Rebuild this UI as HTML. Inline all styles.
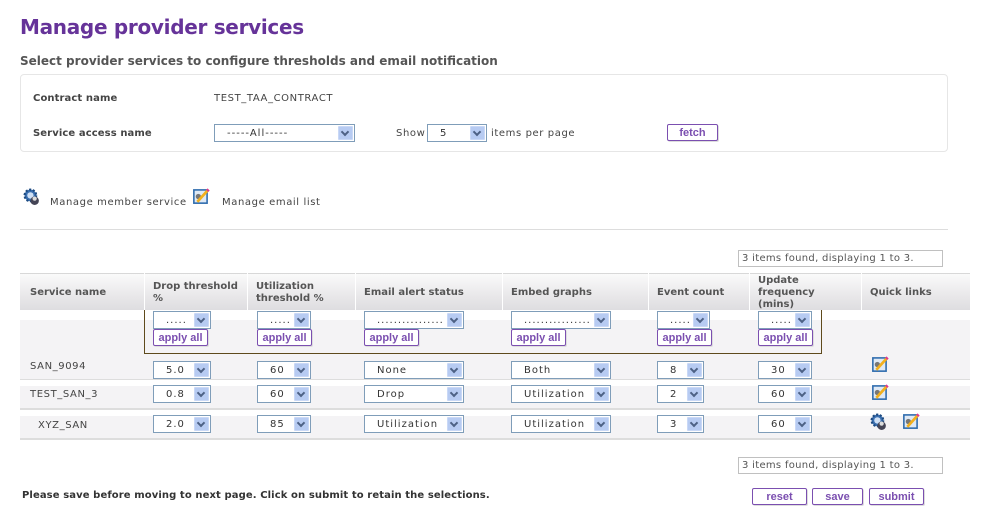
<!DOCTYPE html>
<html><head><meta charset="utf-8"><style>
*{margin:0;padding:0;box-sizing:border-box}
body{width:989px;height:522px;background:#fff;font-family:"DejaVu Sans","Liberation Sans",sans-serif;color:#555;position:relative;overflow:hidden}
.a{position:absolute;white-space:nowrap}
.t{font-size:10px;color:#444;letter-spacing:0.6px}
.b{font-size:10px;font-weight:bold;color:#444;letter-spacing:0.1px}
.sel{position:absolute;height:18px;border:1px solid #7f9db9;background:#fff;font-size:10px;color:#333;line-height:17px;padding-left:12px;letter-spacing:1px}
.sel i{position:absolute;right:1px;top:1px;width:15px;height:14px;background:#b7cbf2;border:1px solid #c9d8f6;border-radius:1px}
.sel i:after{content:"";position:absolute;left:3px;top:2px;width:4px;height:4px;border-right:2px solid #4d6185;border-bottom:2px solid #4d6185;transform:rotate(45deg)}
.btn{position:absolute;height:17px;border:1px solid #7b4fb0;border-radius:2px;background:#fff;color:#7b4fb0;font:bold 11px "Liberation Sans",sans-serif;text-align:center;line-height:17px;box-shadow:1px 1px 0 #ddd}
.th{position:absolute;top:273px;height:37px;font-size:10px;font-weight:bold;color:#555;line-height:12px;display:flex;align-items:center;padding-left:8px;padding-top:3px;border-left:1px solid #fff}
.ic{position:absolute;width:18px;height:18px}
</style></head><body>
<div class="a" style="left:20px;top:15px;font:bold 20px 'DejaVu Sans',sans-serif;color:#663399;letter-spacing:-0.3px">Manage provider services</div>
<div class="a" style="left:20px;top:54px;font:bold 12px 'DejaVu Sans',sans-serif;color:#555">Select provider services to configure thresholds and email notification</div>
<div class="a" style="left:20px;top:74px;width:928px;height:78px;border:1px solid #e6e6e6;border-radius:4px"></div>
<div class="a b" style="left:33px;top:93px">Contract name</div>
<div class="a t" style="left:214px;top:93px">TEST_TAA_CONTRACT</div>
<div class="a b" style="left:33px;top:128px">Service access name</div>
<div class="sel" style="left:214px;top:124px;width:141px">-----All-----<i></i></div>
<div class="a t" style="left:396px;top:128px">Show</div>
<div class="sel" style="left:427px;top:124px;width:60px">5<i></i></div>
<div class="a t" style="left:491px;top:128px">items per page</div>
<div class="btn" style="left:667px;top:124px;width:51px">fetch</div>

<svg class="ic" style="left:23px;top:188px" viewBox="0 0 17 17"><circle cx="7" cy="7" r="5.5" fill="#3a6fb0" stroke="#1d4a80" stroke-dasharray="2 1.5" stroke-width="2"/><circle cx="7" cy="7" r="3" fill="#cfe0f5"/><circle cx="11" cy="12" r="4" fill="#445"/><circle cx="11" cy="10" r="2" fill="#ddd"/></svg>
<div class="a t" style="left:50px;top:197px">Manage member service</div>
<svg class="ic" style="left:192px;top:187px" viewBox="0 0 17 17"><rect x="1" y="2" width="14" height="14" fill="#2f6cae"/><rect x="2.5" y="3.5" width="11" height="11" fill="#dfe9f5"/><circle cx="6" cy="9" r="2.5" fill="#777"/><path d="M5 14L15 3" stroke="#f2b01e" stroke-width="2.5"/><path d="M14 2l2 2" stroke="#e03a8a" stroke-width="2"/></svg>
<div class="a t" style="left:222px;top:197px">Manage email list</div>
<div class="a" style="left:20px;top:229px;width:928px;height:1px;background:#ddd"></div>

<div class="a t" style="left:738px;top:250px;width:205px;height:17px;border:1px solid #c0c0c0;padding-left:3px;line-height:16px;color:#555;letter-spacing:0.3px">3 items found, displaying 1 to 3.</div>

<div class="a" style="left:20px;top:273px;width:950px;height:37px;background:linear-gradient(#fafafa,#e9e8ea 60%,#dedde0);border-top:1px solid #d8d8d8"></div>
<div class="th" style="left:20px;width:124px;border-left:none;padding-left:10px">Service name</div>
<div class="th" style="left:144px;width:103px">Drop threshold<br>%</div>
<div class="th" style="left:247px;width:108px">Utilization<br>threshold %</div>
<div class="th" style="left:355px;width:147px">Email alert status</div>
<div class="th" style="left:502px;width:146px">Embed graphs</div>
<div class="th" style="left:648px;width:101px">Event count</div>
<div class="th" style="left:749px;width:112px">Update<br>frequency<br>(mins)</div>
<div class="th" style="left:861px;width:109px">Quick links</div>

<div class="a" style="left:20px;top:310px;width:950px;height:69px;background:linear-gradient(#fff 0,#fff 10px,#f4f3f5 10px)"></div>
<div class="a" style="left:20px;top:379px;width:950px;height:1px;background:#ddd"></div>
<div class="a" style="left:20px;top:380px;width:950px;height:29px;background:linear-gradient(#fff 0,#fff 6px,#f4f3f5 6px)"></div>
<div class="a" style="left:20px;top:408px;width:950px;height:2px;background:#ddd"></div>
<div class="a" style="left:20px;top:410px;width:950px;height:29px;background:linear-gradient(#fff 0,#fff 6px,#f4f3f5 6px)"></div>
<div class="a" style="left:20px;top:438px;width:950px;height:2px;background:#ddd"></div>
<div class="a" style="left:144px;top:310px;width:678px;height:44px;border:1px solid #5e4a1c;border-top:none"></div>

<div class="sel" style="left:153px;top:311px;width:58px">.....<i></i></div>
<div class="sel" style="left:257px;top:311px;width:54px">.....<i></i></div>
<div class="sel" style="left:364px;top:311px;width:100px">................<i></i></div>
<div class="sel" style="left:511px;top:311px;width:100px">................<i></i></div>
<div class="sel" style="left:657px;top:311px;width:53px">.....<i></i></div>
<div class="sel" style="left:758px;top:311px;width:54px">.....<i></i></div>
<div class="btn" style="left:153px;top:329px;width:55px">apply all</div>
<div class="btn" style="left:257px;top:329px;width:55px">apply all</div>
<div class="btn" style="left:364px;top:329px;width:55px">apply all</div>
<div class="btn" style="left:511px;top:329px;width:55px">apply all</div>
<div class="btn" style="left:657px;top:329px;width:55px">apply all</div>
<div class="btn" style="left:758px;top:329px;width:55px">apply all</div>

<div class="a t" style="left:30px;top:361px">SAN_9094</div>
<div class="a t" style="left:30px;top:389px">TEST_SAN_3</div>
<div class="a t" style="left:38px;top:420px">XYZ_SAN</div>

<div class="sel" style="left:153px;top:361px;width:58px">5.0<i></i></div>
<div class="sel" style="left:257px;top:361px;width:54px">60<i></i></div>
<div class="sel" style="left:364px;top:361px;width:100px">None<i></i></div>
<div class="sel" style="left:511px;top:361px;width:100px">Both<i></i></div>
<div class="sel" style="left:657px;top:361px;width:47px">8<i></i></div>
<div class="sel" style="left:758px;top:361px;width:54px">30<i></i></div>

<div class="sel" style="left:153px;top:385px;width:58px">0.8<i></i></div>
<div class="sel" style="left:257px;top:385px;width:54px">60<i></i></div>
<div class="sel" style="left:364px;top:385px;width:100px">Drop<i></i></div>
<div class="sel" style="left:511px;top:385px;width:100px">Utilization<i></i></div>
<div class="sel" style="left:657px;top:385px;width:47px">2<i></i></div>
<div class="sel" style="left:758px;top:385px;width:54px">60<i></i></div>

<div class="sel" style="left:153px;top:415px;width:58px">2.0<i></i></div>
<div class="sel" style="left:257px;top:415px;width:54px">85<i></i></div>
<div class="sel" style="left:364px;top:415px;width:100px">Utilization<i></i></div>
<div class="sel" style="left:511px;top:415px;width:100px">Utilization<i></i></div>
<div class="sel" style="left:657px;top:415px;width:47px">3<i></i></div>
<div class="sel" style="left:758px;top:415px;width:54px">60<i></i></div>

<svg class="ic" style="left:871px;top:355px" viewBox="0 0 17 17"><rect x="1" y="2" width="14" height="14" fill="#2f6cae"/><rect x="2.5" y="3.5" width="11" height="11" fill="#dfe9f5"/><circle cx="6" cy="9" r="2.5" fill="#777"/><path d="M5 14L15 3" stroke="#f2b01e" stroke-width="2.5"/><path d="M14 2l2 2" stroke="#e03a8a" stroke-width="2"/></svg>
<svg class="ic" style="left:871px;top:383px" viewBox="0 0 17 17"><rect x="1" y="2" width="14" height="14" fill="#2f6cae"/><rect x="2.5" y="3.5" width="11" height="11" fill="#dfe9f5"/><circle cx="6" cy="9" r="2.5" fill="#777"/><path d="M5 14L15 3" stroke="#f2b01e" stroke-width="2.5"/><path d="M14 2l2 2" stroke="#e03a8a" stroke-width="2"/></svg>
<svg class="ic" style="left:870px;top:413px" viewBox="0 0 17 17"><circle cx="7" cy="7" r="5.5" fill="#3a6fb0" stroke="#1d4a80" stroke-dasharray="2 1.5" stroke-width="2"/><circle cx="7" cy="7" r="3" fill="#cfe0f5"/><circle cx="11" cy="12" r="4" fill="#445"/><circle cx="11" cy="10" r="2" fill="#ddd"/></svg>
<svg class="ic" style="left:902px;top:412px" viewBox="0 0 17 17"><rect x="1" y="2" width="14" height="14" fill="#2f6cae"/><rect x="2.5" y="3.5" width="11" height="11" fill="#dfe9f5"/><circle cx="6" cy="9" r="2.5" fill="#777"/><path d="M5 14L15 3" stroke="#f2b01e" stroke-width="2.5"/><path d="M14 2l2 2" stroke="#e03a8a" stroke-width="2"/></svg>

<div class="a t" style="left:738px;top:457px;width:205px;height:17px;border:1px solid #c0c0c0;padding-left:3px;line-height:16px;color:#555;letter-spacing:0.3px">3 items found, displaying 1 to 3.</div>
<div class="a b" style="left:22px;top:490px;color:#333">Please save before moving to next page. Click on submit to retain the selections.</div>
<div class="btn" style="left:752px;top:488px;width:55px">reset</div>
<div class="btn" style="left:812px;top:488px;width:51px">save</div>
<div class="btn" style="left:869px;top:488px;width:55px">submit</div>
</body></html>
